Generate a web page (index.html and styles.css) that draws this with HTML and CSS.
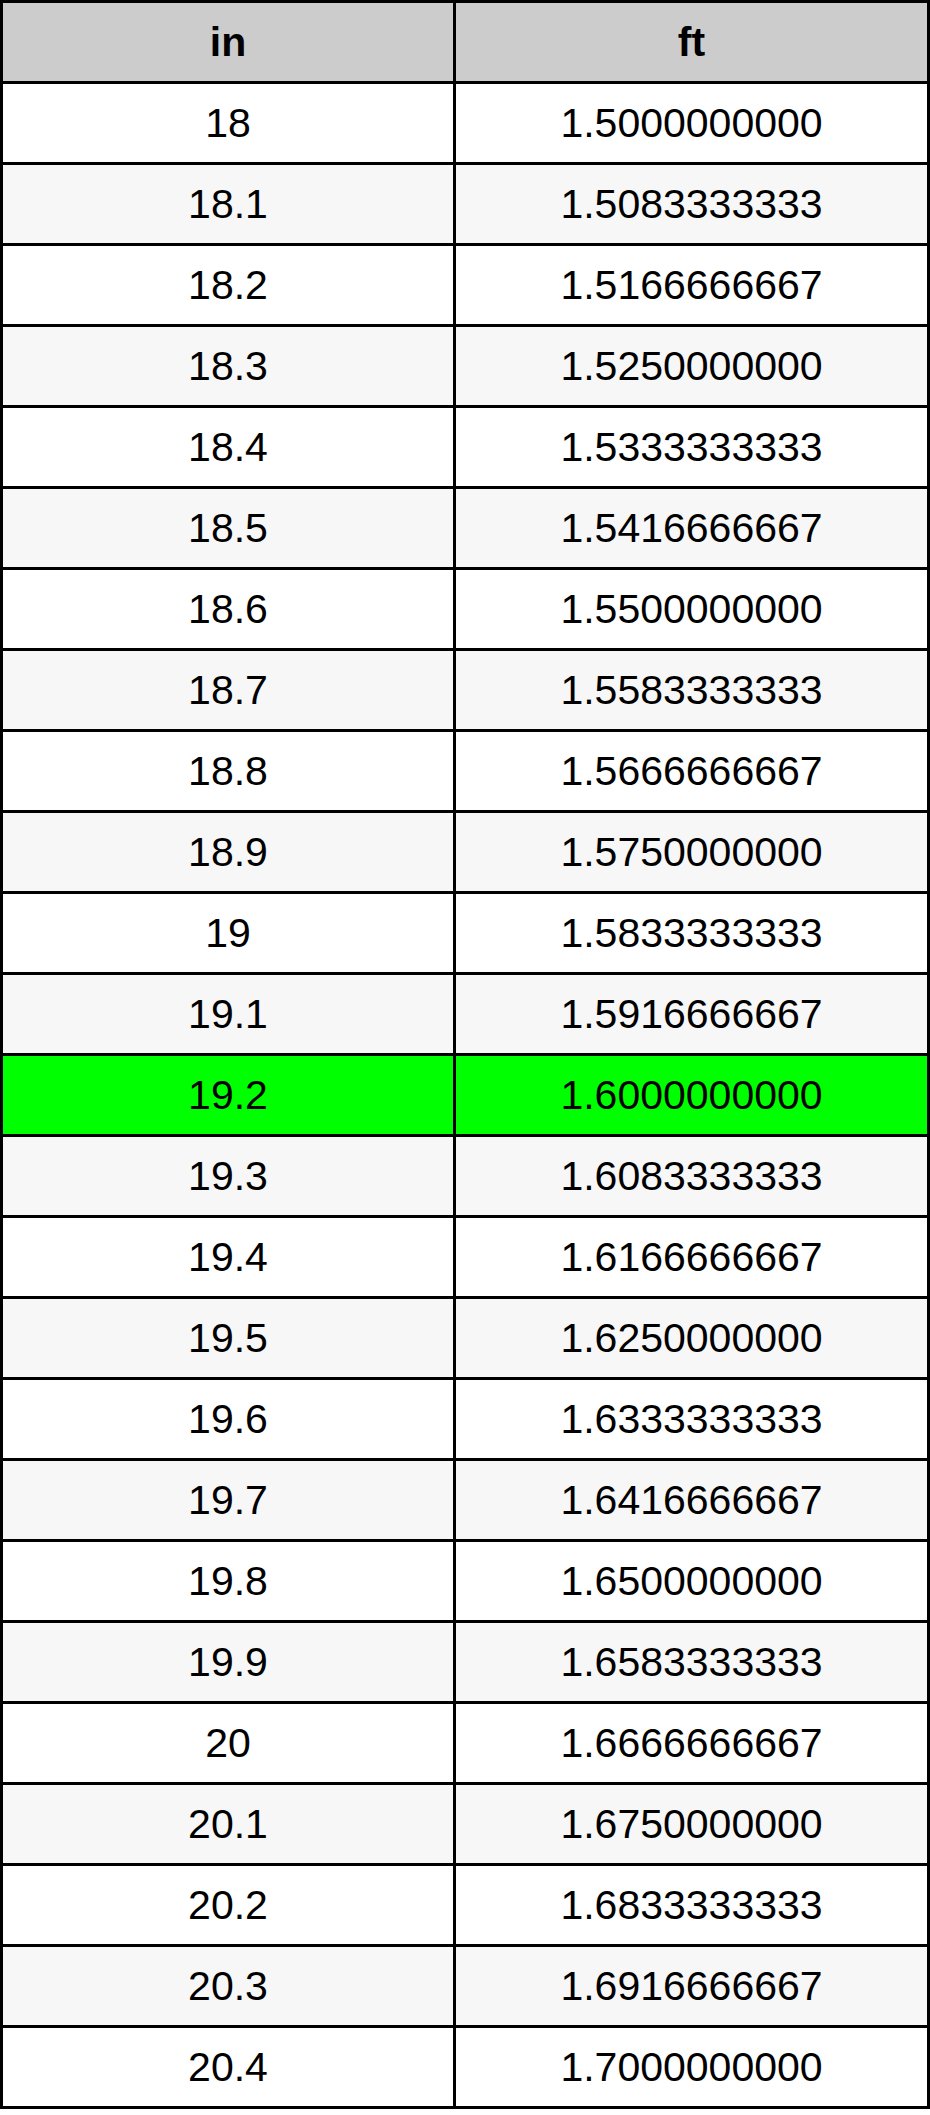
FILE: index.html
```html
<!DOCTYPE html>
<html>
<head>
<meta charset="utf-8">
<link rel="stylesheet" href="styles.css">
</head>
<body>
<table class="conv">
<colgroup><col class="c-in"><col class="c-ft"></colgroup>
<thead>
<tr><th>in</th><th>ft</th></tr>
</thead>
<tbody>
<tr><td>18</td><td>1.5000000000</td></tr>
<tr class="alt"><td>18.1</td><td>1.5083333333</td></tr>
<tr><td>18.2</td><td>1.5166666667</td></tr>
<tr class="alt"><td>18.3</td><td>1.5250000000</td></tr>
<tr><td>18.4</td><td>1.5333333333</td></tr>
<tr class="alt"><td>18.5</td><td>1.5416666667</td></tr>
<tr><td>18.6</td><td>1.5500000000</td></tr>
<tr class="alt"><td>18.7</td><td>1.5583333333</td></tr>
<tr><td>18.8</td><td>1.5666666667</td></tr>
<tr class="alt"><td>18.9</td><td>1.5750000000</td></tr>
<tr><td>19</td><td>1.5833333333</td></tr>
<tr class="alt"><td>19.1</td><td>1.5916666667</td></tr>
<tr class="hl"><td>19.2</td><td>1.6000000000</td></tr>
<tr class="alt"><td>19.3</td><td>1.6083333333</td></tr>
<tr><td>19.4</td><td>1.6166666667</td></tr>
<tr class="alt"><td>19.5</td><td>1.6250000000</td></tr>
<tr><td>19.6</td><td>1.6333333333</td></tr>
<tr class="alt"><td>19.7</td><td>1.6416666667</td></tr>
<tr><td>19.8</td><td>1.6500000000</td></tr>
<tr class="alt"><td>19.9</td><td>1.6583333333</td></tr>
<tr><td>20</td><td>1.6666666667</td></tr>
<tr class="alt"><td>20.1</td><td>1.6750000000</td></tr>
<tr><td>20.2</td><td>1.6833333333</td></tr>
<tr class="alt"><td>20.3</td><td>1.6916666667</td></tr>
<tr><td>20.4</td><td>1.7000000000</td></tr>
</tbody>
</table>
</body>
</html>
```

FILE: styles.css
```css
html, body {
  margin: 0;
  padding: 0;
  background: #ffffff;
}

.conv {
  border-collapse: separate;
  border-spacing: 0;
  width: 930px;
  border-top: 3px solid #000;
  border-left: 3px solid #000;
  font-family: "Liberation Sans", Arial, sans-serif;
  font-size: 41px;
  color: #000;
  table-layout: fixed;
}

.c-in { width: 453px; }
.c-ft { width: 474px; }

.conv th,
.conv td {
  height: 81px;
  padding: 0;
  box-sizing: border-box;
  border-right: 3px solid #000;
  border-bottom: 3px solid #000;
  text-align: center;
  vertical-align: middle;
  line-height: 1;
}

.conv th {
  background: #cccccc;
  font-weight: bold;
}

.conv tbody tr { background: #ffffff; }
.conv tbody tr.alt { background: #f7f7f7; }
.conv tbody tr.hl { background: #00ff00; }
```
